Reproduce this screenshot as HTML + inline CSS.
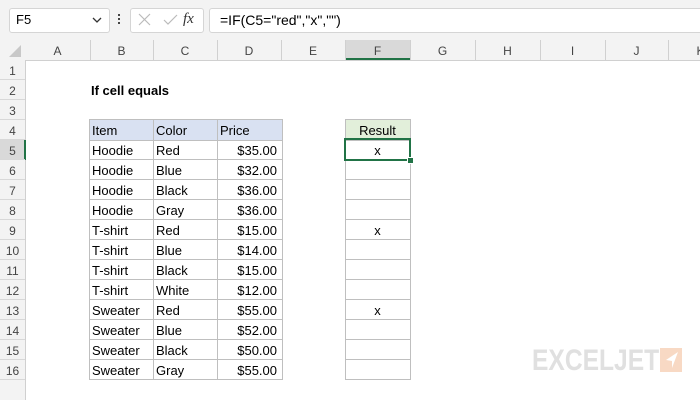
<!DOCTYPE html><html><head><style>
body{margin:0;width:700px;height:400px;overflow:hidden;background:#fff;font-family:"Liberation Sans",sans-serif;position:relative}
.a{position:absolute}
.t{position:absolute;font-size:13px;line-height:20px;color:#000;white-space:nowrap;padding-top:1px}
</style></head><body>
<div class="a" style="left:0;top:0;width:700px;height:40px;background:#f3f3f3"></div>
<div class="a" style="left:9px;top:8px;width:99px;height:23px;background:#fff;border:1px solid #d5d5d5;border-radius:3px"></div>
<div class="t" style="left:16px;top:9px;font-size:13px">F5</div>
<svg class="a" style="left:92px;top:16px" width="10" height="8"><path d="M1 2 L5 6 L9 2" stroke="#333" fill="none" stroke-width="1.3"/></svg>
<div class="a" style="left:118px;top:14px;width:2px;height:2px;background:#444;box-shadow:0 4px #444,0 8px #444"></div>
<div class="a" style="left:130px;top:8px;width:72px;height:23px;background:#fff;border:1px solid #d5d5d5;border-radius:3px"></div>
<svg class="a" style="left:137px;top:13px" width="60" height="14"><path d="M2 1 L13 12 M13 1 L2 12" stroke="#bbb" stroke-width="1.2"/><path d="M27 7 L31 11 L40 2" stroke="#bbb" fill="none" stroke-width="1.2"/></svg>
<div class="t" style="left:183px;top:8px;font-family:'Liberation Serif',serif;font-style:italic;font-size:15px;color:#333">fx</div>
<div class="a" style="left:209px;top:8px;width:500px;height:23px;background:#fff;border:1px solid #d5d5d5;border-radius:3px"></div>
<div class="t" style="left:220px;top:9px;font-size:14px">=IF(C5="red","x","")</div>
<div class="a" style="left:0;top:40px;width:700px;height:20px;background:#f3f3f3;border-bottom:1px solid #d0d0d0"></div>
<div class="a" style="left:0;top:60px;width:25px;height:340px;background:#f3f3f3;border-right:1px solid #d0d0d0"></div>
<svg class="a" style="left:8px;top:45px" width="14" height="13"><path d="M13 0 L13 12 L1 12Z" fill="#c8c8c8"/></svg>
<div class="a" style="left:345px;top:40px;width:65px;height:20px;background:#d9d9d9;border-bottom:2px solid #217346;box-sizing:border-box"></div>
<div class="a" style="left:0;top:140px;width:26px;height:20px;background:#d9d9d9;border-right:2px solid #217346;box-sizing:border-box"></div>
<div id="cols"></div><div id="rows"></div>
<div class="t" style="left:91px;top:80px;font-weight:bold">If cell equals</div>
<div id="tbl"></div>
<div class="t" style="left:532px;top:340px;font-size:30px;line-height:40px;font-weight:bold;color:#e0e0e0;transform:scaleX(0.82);transform-origin:left">EXCELJET</div>
<div class="a" style="left:660px;top:348px;width:22px;height:24px;background:#f8d9c4"></div>
<svg class="a" style="left:660px;top:348px" width="22" height="24"><path d="M18 4 L6 12 L12 13 L12 20Z" fill="#fff"/></svg>
<script>
var cols=[["A",25,90],["B",90,153],["C",153,217],["D",217,281],["E",281,345],["F",345,410],["G",410,475],["H",475,540],["I",540,605],["J",605,668],["K",668,733]];
var h="";cols.forEach(c=>{h+=`<div class="t" style="left:${c[1]}px;top:40px;width:${c[2]-c[1]}px;text-align:center;color:#444;font-size:12px">${c[0]}</div><div class="a" style="left:${c[2]}px;top:40px;width:1px;height:20px;background:#d0d0d0"></div>`});
document.getElementById("cols").innerHTML=h;
h="";for(var r=1;r<=16;r++){var y=40+r*20;h+=`<div class="t" style="left:0;top:${y}px;width:25px;text-align:center;color:#444;font-size:12px">${r}</div><div class="a" style="left:0;top:${y+19}px;width:25px;height:1px;background:#d8d8d8"></div>`}
document.getElementById("rows").innerHTML=h;
var d=[["Hoodie","Red","$35.00","x"],["Hoodie","Blue","$32.00",""],["Hoodie","Black","$36.00",""],["Hoodie","Gray","$36.00",""],["T-shirt","Red","$15.00","x"],["T-shirt","Blue","$14.00",""],["T-shirt","Black","$15.00",""],["T-shirt","White","$12.00",""],["Sweater","Red","$55.00","x"],["Sweater","Blue","$52.00",""],["Sweater","Black","$50.00",""],["Sweater","Gray","$55.00",""]];
h=`<div class="a" style="left:89px;top:119px;width:192px;height:20px;background:#d9e1f2;border:1px solid #bfbfbf"></div><div class="a" style="left:345px;top:119px;width:64px;height:20px;background:#e2efda;border:1px solid #bfbfbf"></div>
<div class="t" style="left:92px;top:120px">Item</div><div class="t" style="left:156px;top:120px">Color</div><div class="t" style="left:220px;top:120px">Price</div><div class="t" style="left:345px;top:120px;width:65px;text-align:center">Result</div>`;
d.forEach((r,i)=>{var y=140+i*20;
h+=`<div class="a" style="left:89px;top:${y}px;width:192px;height:19px;border:1px solid #bfbfbf;border-top:none"></div><div class="a" style="left:345px;top:${y}px;width:64px;height:19px;border:1px solid #bfbfbf;border-top:none"></div>
<div class="t" style="left:92px;top:${y}px">${r[0]}</div><div class="t" style="left:156px;top:${y}px">${r[1]}</div><div class="t" style="left:217px;top:${y}px;width:60px;text-align:right">${r[2]}</div><div class="t" style="left:345px;top:${y}px;width:65px;text-align:center">${r[3]}</div>`});
["153","217"].forEach(x=>h+=`<div class="a" style="left:${x}px;top:119px;width:1px;height:261px;background:#bfbfbf"></div>`);
h+=`<div class="a" style="left:344px;top:138px;width:67px;height:23px;border:2px solid #217346;box-sizing:border-box"></div><div class="a" style="left:407px;top:157px;width:5px;height:5px;background:#217346;border:1px solid #fff"></div>`;
document.getElementById("tbl").innerHTML=h;
</script>
</body></html>
